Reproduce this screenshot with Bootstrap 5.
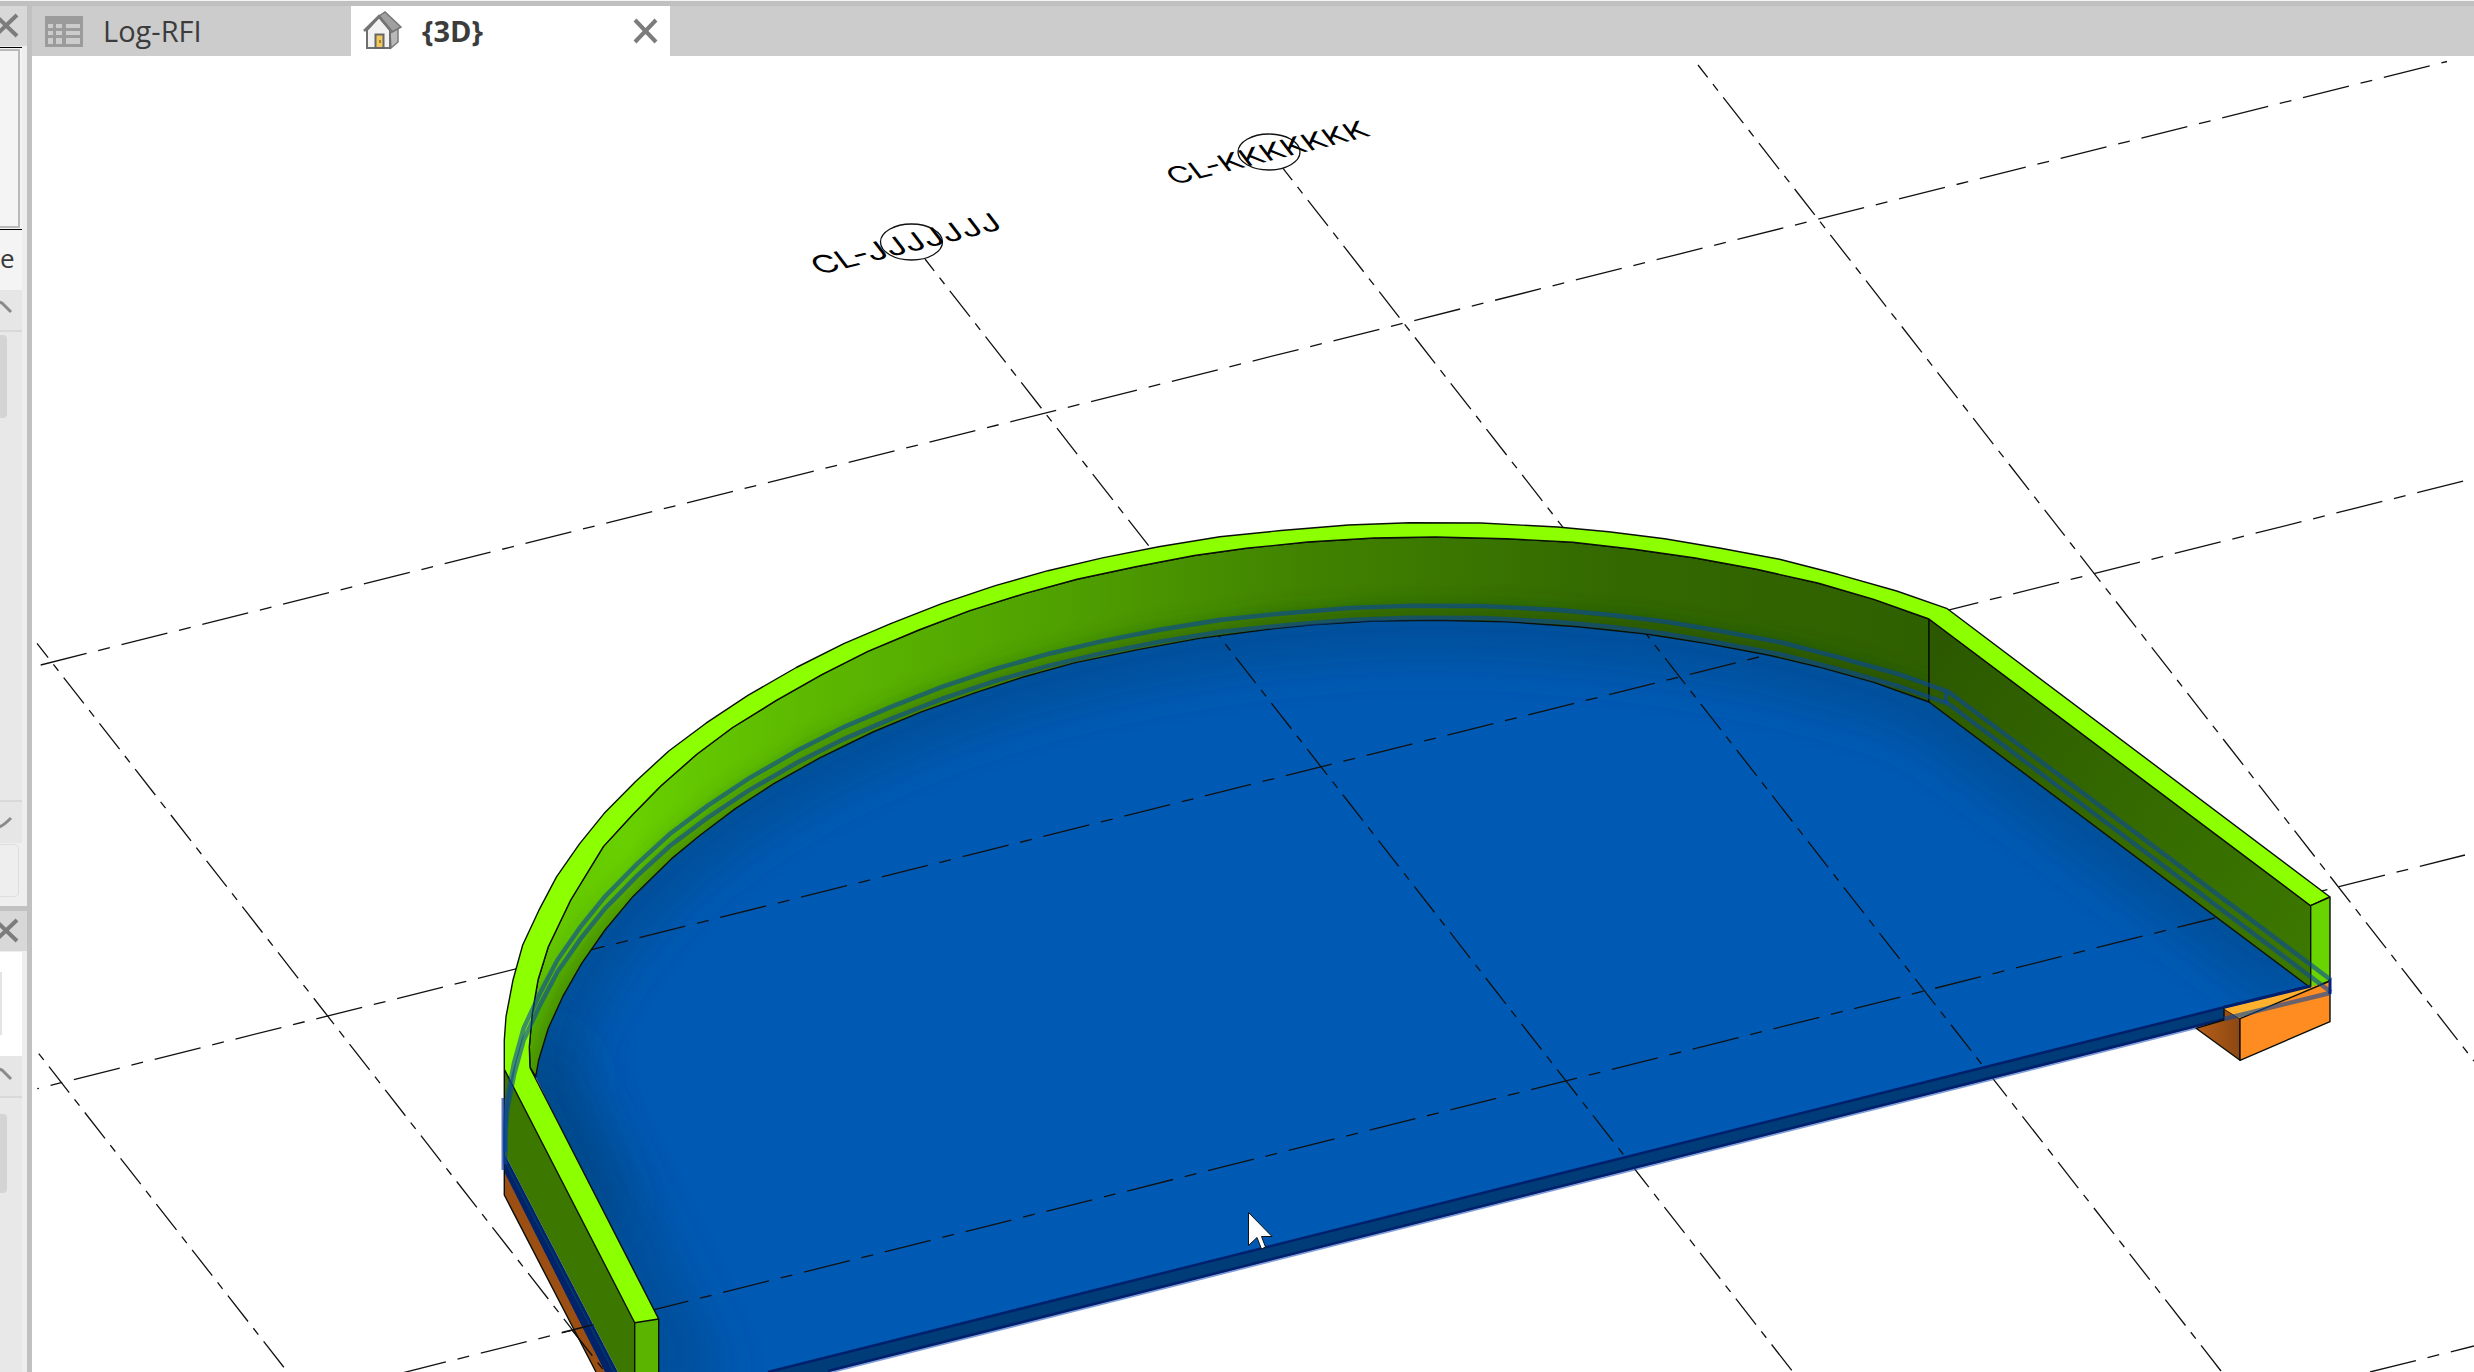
<!DOCTYPE html>
<html lang="en">
<head>
<meta charset="utf-8">
<meta name="viewport" content="width=device-width, initial-scale=1">
<title>{3D}</title>
<link href="https://cdn.jsdelivr.net/npm/bootstrap@5.3.0/dist/css/bootstrap.min.css" rel="stylesheet">
<style>
body{font-family:"Open Sans","Noto Sans",sans-serif;color:#3a3a3a;background:#fff}
.app{border-top:1px solid #f4f6f4}
.app-body{border-top:5px solid #c0c0c0;min-height:0}
.dock{width:27px;flex:none;background:#eee}
.splitter{width:5px;flex:none;background:#c1c1c1}
.dock-head{height:40px;background:#d8d8d8}
.dock-head button,.fold button,.doc-tab button{background:none;border:0;padding:0;line-height:0}
.dock-inner{width:22px}
.preview{height:183px;border-top:1px solid #000;border-bottom:1px solid #000;background:#f4f4f4;padding:1px 2px 1px 0;margin-top:1px}
.preview-box{height:100%;border:2px solid #b9b9b9;border-left:0}
.type-row{height:60px;background:#f4f4f4;font-size:26px;line-height:56px;color:#3b3b3b}
.fold{height:42px;background:#e6e6e6;border-bottom:2px solid #d9d9d9}
.props{background:#e8e8e8}
.edit-cell{width:7px;background:#d4d4d4;border-radius:0 4px 4px 0}
.edit-a{height:83px;margin-top:3px}
.edit-b{height:79px;margin-top:16px}
.props-a{height:468px}
.fold-end{height:43px;background:#e6e6e6;border-top:2px solid #d9d9d9}
.apply{width:19px;height:53px;border:1px solid #ddd;border-left:0;border-radius:0 5px 5px 0;margin:1px 0 9px}
.dock-split{height:5px;background:#c1c1c1}
.search{height:104px;background:#fff;padding-top:20px;margin-top:1px}
.search-box{width:2px;height:63px;background:#e4e4e4}
.tabbar{height:50px;background:#ccc;flex:none}
.doc-tab{width:319px;font-size:29px;line-height:40px;padding-left:12px}
.doc-tab.on{background:#fff;font-weight:700}
.doc-tab a{color:#3c3c3c;text-decoration:none;margin-left:19px}
.doc-tab button{margin-right:12px}
.view{min-height:0;overflow:hidden}
.view svg{display:block;width:100%;height:100%}
.ax{stroke:#111;stroke-width:1.3;fill:none;stroke-dasharray:47.3 12 12 12}
.by{stroke:#111;stroke-width:1.3;fill:none;stroke-dasharray:32.8 8.6 8.1 8.6}
.edge{stroke:#0a0f0a;stroke-width:1.4;fill:none;stroke-linejoin:round}
.ghost{stroke:#0846a0;stroke-opacity:.6;stroke-width:4.5;fill:none}
.tag{font-family:Inter,Roboto,sans-serif;font-weight:400;fill:#000}
.tag-j{font-size:34px}
.tag-k{font-size:32px}
</style>
<script src="https://cdn.jsdelivr.net/npm/bootstrap@5.3.0/dist/js/bootstrap.bundle.min.js"></script>
</head>
<body>
<div class="app d-flex flex-column vh-100 overflow-hidden">
<div class="app-body d-flex flex-grow-1">
<aside class="dock overflow-hidden" aria-label="Properties">
  <div class="dock-head d-flex"><button type="button" aria-label="Close properties"><svg width="19" height="40" viewBox="0 0 19 40"><path d="M-5 9L17 30M17 9L-5 30" stroke="#7c7c7c" stroke-width="4"/></svg></button></div>
  <div class="dock-inner">
    <div class="preview"><div class="preview-box"></div></div>
    <div class="type-row">e</div>
    <div class="fold"><button type="button" aria-label="Collapse group"><svg width="14" height="40" viewBox="0 0 14 40"><path d="M-1 12L2 13L11 22" fill="none" stroke="#8b8b8b" stroke-width="3"/></svg></button></div>
    <div class="props props-a overflow-hidden"><div class="edit-cell edit-a"></div></div>
    <div class="fold-end"><svg width="14" height="40" viewBox="0 0 14 40"><path d="M-1 25Q3 24 11 16" fill="none" stroke="#8b8b8b" stroke-width="3"/></svg></div>
    <div class="apply"></div>
  </div>
  <div class="dock-split"></div>
  <div class="dock-head d-flex"><button type="button" aria-label="Close browser"><svg width="19" height="40" viewBox="0 0 19 40"><path d="M-5 9L17 30M17 9L-5 30" stroke="#7c7c7c" stroke-width="4"/></svg></button></div>
  <div class="dock-inner">
    <div class="search"><div class="search-box"></div></div>
    <div class="fold"><button type="button" aria-label="Collapse group"><svg width="14" height="40" viewBox="0 0 14 40"><path d="M-1 13L2 14L11 23" fill="none" stroke="#8b8b8b" stroke-width="3"/></svg></button></div>
    <div class="props vh-100 overflow-hidden"><div class="edit-cell edit-b"></div></div>
  </div>
</aside>
<div class="splitter"></div>
<main class="d-flex flex-column flex-grow-1 overflow-hidden">
  <nav class="tabbar d-flex" aria-label="Open views">
    <div class="doc-tab d-flex align-items-center">
      <svg width="40" height="36" viewBox="0 0 40 36"><path d="M1 3h38v31H1z" fill="#9b9b9b"/><path d="M4 11h5v4H4zM12 11h6v4h-6zM22 11h14v4H22zM4 18h5v4H4zM12 18h6v4h-6zM22 18h14v4H22zM4 25h5v6H4zM12 25h6v6h-6zM22 25h14v6H22z" fill="#ccc"/></svg>
      <a href="#log">Log-RFI</a>
    </div>
    <div class="doc-tab on d-flex align-items-center">
      <svg width="40" height="40" viewBox="0 0 40 40"><path d="M27 22L35 17V31L28 37z" fill="#b9b9b9" stroke="#7b7b7b" stroke-width="1.5"/><path d="M16 6L27 19V37H4V19z" fill="#f2f2f2" stroke="#6f6f6f" stroke-width="2"/><path d="M16 5L22 1L38 16L29 21z" fill="#a0a0a0" stroke="#757575" stroke-width="1.5"/><path d="M1 20L16 5L29 21" fill="none" stroke="#757575" stroke-width="2.5"/><path d="M12.500 23.500h8V37h-8z" fill="#f2c95c" stroke="#666" stroke-width="2"/><path d="M17 29v3" stroke="#8a6a20" stroke-width="1.500"/></svg>
      <a href="#v3d" aria-current="page">{3D}</a>
      <button type="button" class="ms-auto" aria-label="Close view"><svg width="25" height="26" viewBox="0 0 25 26"><path d="M2 2L23 24M23 2L2 24" stroke="#7c7c7c" stroke-width="4"/></svg></button>
    </div>
  </nav>
  <div class="view flex-grow-1">
  <svg viewBox="32 56 2442 1316" preserveAspectRatio="xMinYMin slice" role="img" aria-label="3D model view">
    <defs>
      <linearGradient id="wall" gradientUnits="userSpaceOnUse" x1="530" y1="0" x2="1929" y2="0">
        <stop offset="0" stop-color="#62c400"/><stop offset=".07" stop-color="#68d000"/><stop offset=".2" stop-color="#5cb800"/><stop offset=".38" stop-color="#4fa000"/><stop offset=".55" stop-color="#418300"/><stop offset=".78" stop-color="#336800"/><stop offset="1" stop-color="#2f6000"/>
      </linearGradient>
      <linearGradient id="rwall" gradientUnits="userSpaceOnUse" x1="1929" y1="660" x2="2311" y2="950"><stop offset="0" stop-color="#2c5900"/><stop offset="1" stop-color="#3c7800"/></linearGradient>
      <linearGradient id="odark" x1="0" y1="0" x2="1" y2="0"><stop offset="0" stop-color="#b85f18"/><stop offset="1" stop-color="#8c4812"/></linearGradient>
      <path id="floor" d="M535.7 1076.7L538.7 1060L548.3 1028.3L562.7 996.7L581.7 963.3L605 930L633 896.4L671.3 858.9L699.4 835.7L735 808.9L773.4 783.9L819.3 758.2L872.9 732L921.3 711.8L974.9 692.9L1023.4 677L1074.4 662.9L1138 649.6L1199.4 638.4L1266.7 629.5L1312.7 624.7L1373.9 621L1435 620.3L1506.5 621.7L1578 626.7L1644.3 633.7L1705.5 643.3L1766.7 654.7L1817.8 666.7L1873.9 682.3L1929 702L2311 988L2224 1007.3L768 1372H650V1310z"/>
      <path id="wallface" d="M530 1067L529.3 1046.7L532.3 1013.3L538 980L548.3 946.7L570.7 900L603.5 846.4L633 814.3L661 785.7L696.8 754.3L732.6 727.5L775.9 700.7L821.8 674.6L867.8 651.4L918.8 630L969.8 610.7L1023.4 593.9L1077 579.3L1135.6 566.8L1194.3 555.5L1246.3 548.3L1307.6 542L1373.9 538L1435 537L1506.5 538.7L1572.9 542.3L1634 549.3L1695.3 558L1756.5 569.3L1817.8 583L1873.9 599.3L1929 619V702L1873.9 682.3L1817.8 666.7L1766.7 654.7L1705.5 643.3L1644.3 633.7L1578 626.7L1506.5 621.7L1435 620.3L1373.9 621L1312.7 624.7L1266.7 629.5L1199.4 638.4L1138 649.6L1074.4 662.9L1023.4 677L974.9 692.9L921.3 711.8L872.9 732L819.3 758.2L773.4 783.9L735 808.9L699.4 835.7L671.3 858.9L633 896.4L605 930L581.7 963.3L562.7 996.7L548.3 1028.3L538.7 1060L535.7 1076.7z"/>
      <path id="outer" d="M504.300 1069.300L504.300 1040L506 1016.700L513 980L522.700 945L538.700 910.700L556.500 876.800L579.500 843.900L604 813.600L635.600 781.400L668.800 751L706 723.200L747.900 695.400L796.300 667.500L843.800 643.600L890.700 623.600L941.700 603.600L995.300 585.700L1047.900 570.700L1102.400 557.900L1158.600 546.800L1219.800 536.800L1281 530.500L1348.400 525L1409.600 522.700L1481 523L1557.600 527L1608.600 531.700L1664.700 538.700L1720.800 548.300L1779.500 559.300L1838 574.300L1896.700 591L1947.300 608.700L2330 897"/>
      <clipPath id="cf"><use href="#floor"/></clipPath>
      <clipPath id="cw"><use href="#wallface"/></clipPath>
      <filter id="soft" filterUnits="userSpaceOnUse" x="400" y="500" width="2074" height="1000"><feGaussianBlur stdDeviation="28"/></filter>
      <filter id="soft2" filterUnits="userSpaceOnUse" x="400" y="500" width="2074" height="1000"><feGaussianBlur stdDeviation="12"/></filter>
      <path id="arcB" d="M600 1230L535.7 1076.7L538.7 1060L562.7 996.7L605 930L671.3 858.9L735 808.9L819.3 758.2L921.3 711.8L1023.4 677L1138 649.6L1266.7 629.5L1373.9 621L1435 620.3L1506.5 621.7L1644.3 633.7L1766.7 654.7L1873.9 682.3L1929 702L2311 988"/>
    </defs>

    <!-- grid lines on the ground plane -->
    <path class="ax" d="M40.700 665L2447 61.500"/>
    <path class="ax" stroke-dashoffset="45.6" d="M37.300 1088.700L2474 478.500"/>
    <path class="ax" d="M400 1373.500L2465 855"/>
    <path class="ax" d="M2370 1372L2474 1346"/>
    <path class="by" stroke-dashoffset="14.7" d="M37 643.300L606 1373"/>
    <path class="by" stroke-dashoffset="40.7" d="M38.300 1053L284 1367.500"/>
    <path class="by" stroke-dashoffset="17.8" d="M925 259L1793 1372"/>
    <path class="by" stroke-dashoffset="17.8" d="M1283 168.300L2221 1371"/>
    <path class="by" stroke-dashoffset="17.1" d="M1698 65L2474 1061"/>

    <!-- floor slab -->
    <path d="M768 1372L2224 1007.300V1020L828 1372z" fill="#003c78"/>
    <use href="#floor" fill="#005ab4"/>
    <g clip-path="url(#cf)"><use href="#arcB" fill="none" stroke="#003c74" stroke-width="64" stroke-opacity=".48" filter="url(#soft)"/><path d="M520 1050L690 1400" stroke="#003c74" stroke-width="90" stroke-opacity=".42" filter="url(#soft)"/></g>
    <g clip-path="url(#cf)">
      <path class="ax" stroke-dashoffset="45.6" d="M37.300 1088.700L1759 657"/>
      <path class="ax" d="M400 1373.500L2215 918"/>
      <path class="by" stroke-dashoffset="17.8" d="M925 259L1793 1372"/>
      <path class="by" stroke-dashoffset="17.8" d="M1283 168.300L2221 1371"/>
    </g>
    <path d="M828 1372.500L2224 1020.500" fill="none" stroke="#2a5cc0" stroke-opacity=".6" stroke-width="3"/>
    <path d="M828 1371L2224 1019M768 1372L2224 1007.300L2311 986" fill="none" stroke="#00206c" stroke-width="2.500"/>

    <!-- curved wall -->
    <use href="#wallface" fill="url(#wall)"/>
    <g clip-path="url(#cw)"><use href="#arcB" fill="none" stroke="#1c4000" stroke-width="26" stroke-opacity=".5" filter="url(#soft2)"/></g>
    <use href="#wallface" class="edge"/>
    <path d="M1929 619L2310.700 905.700V988L1929 702z" class="edge" style="fill:url(#rwall)"/>
    <path d="M504.300 1069.300L504.300 1040L506 1016.700L513 980L522.700 945L538.700 910.700L556.500 876.800L579.500 843.900L604 813.600L635.600 781.400L668.800 751L706 723.200L747.900 695.400L796.300 667.500L843.800 643.600L890.700 623.600L941.700 603.600L995.300 585.700L1047.900 570.700L1102.400 557.900L1158.600 546.800L1219.800 536.800L1281 530.500L1348.400 525L1409.600 522.700L1481 523L1557.600 527L1608.600 531.700L1664.700 538.700L1720.800 548.300L1779.500 559.300L1838 574.300L1896.700 591L1947.300 608.700L2330 897L2310.700 905.700L1929 619L1873.900 599.300L1817.800 583L1756.500 569.300L1695.300 558L1634 549.300L1572.900 542.300L1506.500 538.700L1435 537L1373.900 538L1307.600 542L1246.300 548.300L1194.300 555.500L1135.600 566.800L1077 579.300L1023.400 593.900L969.800 610.700L918.800 630L867.800 651.400L821.800 674.600L775.900 700.700L732.600 727.500L696.800 754.300L661 785.700L633 814.300L603.500 846.400L570.700 900L548.300 946.700L538 980L532.300 1013.300L529.300 1046.700L530 1067.700L658.700 1319L634.700 1322.700z" fill="#8cff00"/>
    <use href="#outer" class="edge"/>
    <path class="edge" d="M530 1067.700L529.300 1046.700L532.300 1013.300L538 980L548.300 946.700L570.700 900L603.500 846.400L633 814.300L661 785.700L696.800 754.300L732.600 727.500L775.900 700.700L821.800 674.600L867.800 651.400L918.800 630L969.800 610.700L1023.400 593.900L1077 579.300L1135.600 566.800L1194.300 555.500L1246.300 548.300L1307.600 542L1373.900 538L1435 537L1506.500 538.700L1572.900 542.300L1634 549.300L1695.300 558L1756.500 569.300L1817.800 583L1873.900 599.300L1929 619L2310.700 905.700L2330 897"/>

    <!-- left wall, slab edge and footing -->
    <path d="M504.300 1171L608 1372H596L504.300 1195z" fill="#9c4f12"/>
    <path d="M504.300 1069.300L634.700 1322.700V1372H618L504.300 1153z" fill="#3c7800"/>
    <path d="M504.300 1153L619 1374H606L504.300 1172z" fill="#00236a"/>
    <path d="M504.300 1160L616 1376" stroke="#003a66" stroke-width="1.500"/>
    <path d="M634.700 1322.700L658.700 1319V1374H634.700z" fill="#5ab400"/>
    <path class="edge" d="M530 1067.700L658.700 1319V1374M504.300 1069.300L634.700 1322.700L658.700 1319M634.700 1322.700V1374M504.300 1069.300V1195L596 1372"/>
    <path d="M503 1098V1170" stroke="#1c3c9c" stroke-opacity=".7" stroke-width="3"/>
    <path class="by" d="M572 1330L606 1373"/><path class="ax" d="M562 1332.500L592 1325"/>

    <!-- right wall end and footing -->
    <path class="edge" style="fill:#69d400" d="M2310.700 905.700L2330 897V981L2310.700 988z"/>
    <path class="edge" style="fill:url(#odark)" d="M2224 1008.700L2240 1018.700V1060.300L2196 1028.300L2224 1020z"/>
    <path d="M2224 1008.700L2310 987L2330 981L2240 1018.700z" fill="#ffb02c"/>
    <path class="edge" style="fill:#ff8c20" d="M2240 1018.700L2330 981V1021.700L2240 1060.300z"/>
    <path d="M2224 1007.300L2311 986" stroke="#00206c" stroke-width="3"/>

    <!-- slab outline showing through the walls -->
    <use href="#outer" class="ghost" transform="translate(1 83)"/>
    <use href="#outer" class="ghost" transform="translate(1 95)"/>
    <path class="ghost" d="M1946 692V703M2330 993L2224 1019"/>
    <path d="M2330 979V994" stroke="#00247c" stroke-width="3"/>

    <!-- grid heads -->
    <ellipse cx="911.500" cy="242" rx="31" ry="18" fill="none" stroke="#111" stroke-width="1.300"/>
    <ellipse cx="1269" cy="152" rx="31" ry="18" fill="none" stroke="#111" stroke-width="1.300"/>
    <text class="tag tag-j" transform="matrix(.97 -.243 .5 .66 819 275)">CL-JJJJJJJ</text>
    <text class="tag tag-k" transform="matrix(.97 -.243 .5 .66 1174 185)">CL-KKKKKKK</text>

    <!-- pointer -->
    <path d="M1248.500 1212.500V1245.500L1257 1237.500L1261.500 1249L1265.500 1247L1261.500 1236.500H1272z" fill="#fff" stroke="#111" stroke-width="1"/>
  </svg>
  </div>
</main>
</div>
</div>
</body>
</html>
